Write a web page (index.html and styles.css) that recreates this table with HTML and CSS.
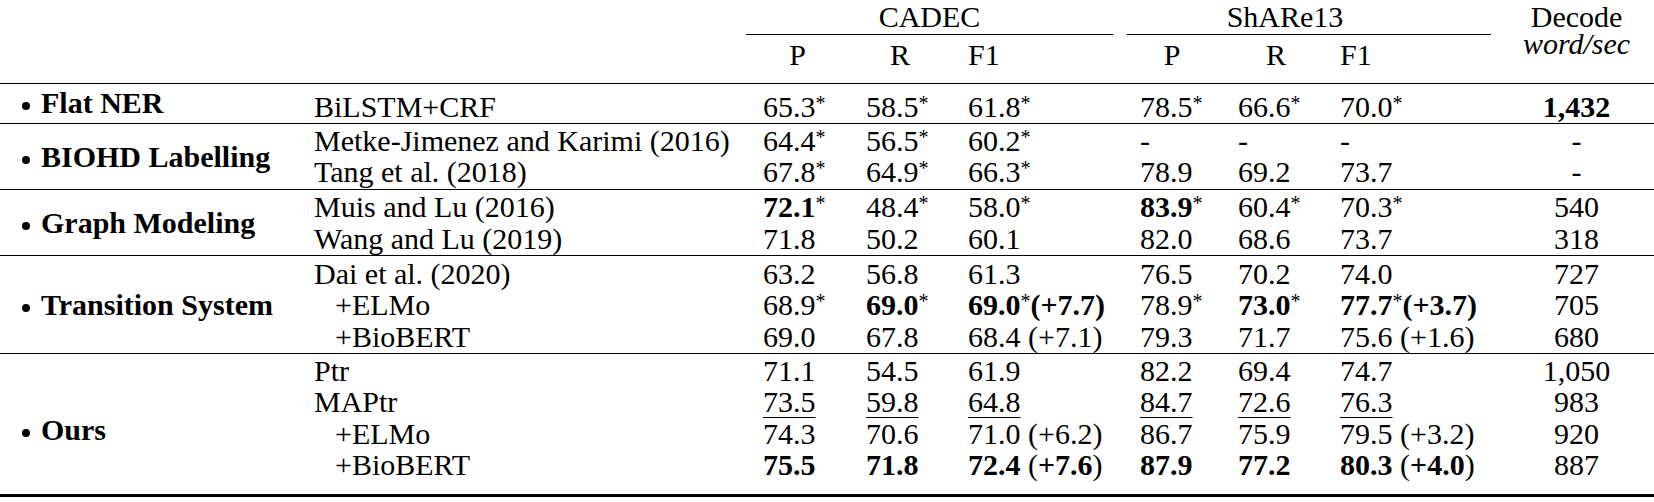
FILE: index.html
```html
<!DOCTYPE html>
<html lang="en">
<head>
  <meta charset="UTF-8">
  <title>Discontinuous NER results</title>
  <link rel="stylesheet" href="styles.css">
</head>
<body>

<table class="results">
  <colgroup>
    <col class="c-cat">
    <col class="c-model">
    <col class="c-p1">
    <col class="c-r1">
    <col class="c-f1">
    <col class="c-p2">
    <col class="c-r2">
    <col class="c-f2">
    <col class="c-speed">
  </colgroup>

  <thead>
    <tr class="head-1">
      <th rowspan="2"></th>
      <th rowspan="2"></th>
      <th colspan="3"><div class="group rule-cadec">CADEC</div></th>
      <th colspan="3"><div class="group rule-share"><span class="share-name">ShARe13</span></div></th>
      <th rowspan="2" class="speed-head">
        <div class="speed-1">Decode</div>
        <div class="speed-2"><i>word/sec</i></div>
      </th>
    </tr>
    <tr class="head-2">
      <th class="mid">P</th>
      <th class="mid">R</th>
      <th class="left">F1</th>
      <th class="mid">P</th>
      <th class="mid shift">R</th>
      <th class="left">F1</th>
    </tr>
  </thead>

  <!-- Flat NER -->
  <tbody class="flat">
    <tr>
      <td class="cat"><span class="dot"></span><b>Flat NER</b></td>
      <td class="m">BiLSTM+CRF</td>
      <td class="n">65.3<sup>*</sup></td>
      <td class="n">58.5<sup>*</sup></td>
      <td class="n">61.8<sup>*</sup></td>
      <td class="n">78.5<sup>*</sup></td>
      <td class="n">66.6<sup>*</sup></td>
      <td class="n">70.0<sup>*</sup></td>
      <td class="s"><b>1,432</b></td>
    </tr>
  </tbody>

  <!-- BIOHD -->
  <tbody class="biohd">
    <tr>
      <td class="cat" rowspan="2"><span class="dot"></span><b>BIOHD Labelling</b></td>
      <td class="m">Metke-Jimenez and Karimi (2016)</td>
      <td class="n">64.4<sup>*</sup></td>
      <td class="n">56.5<sup>*</sup></td>
      <td class="n">60.2<sup>*</sup></td>
      <td class="n">-</td>
      <td class="n">-</td>
      <td class="n">-</td>
      <td class="s">-</td>
    </tr>
    <tr>
      <td class="m">Tang et al. (2018)</td>
      <td class="n">67.8<sup>*</sup></td>
      <td class="n">64.9<sup>*</sup></td>
      <td class="n">66.3<sup>*</sup></td>
      <td class="n">78.9</td>
      <td class="n">69.2</td>
      <td class="n">73.7</td>
      <td class="s">-</td>
    </tr>
  </tbody>

  <!-- Graph -->
  <tbody>
    <tr>
      <td class="cat" rowspan="2"><span class="dot"></span><b>Graph Modeling</b></td>
      <td class="m">Muis and Lu (2016)</td>
      <td class="n"><b>72.1</b><sup>*</sup></td>
      <td class="n">48.4<sup>*</sup></td>
      <td class="n">58.0<sup>*</sup></td>
      <td class="n"><b>83.9</b><sup>*</sup></td>
      <td class="n">60.4<sup>*</sup></td>
      <td class="n">70.3<sup>*</sup></td>
      <td class="s">540</td>
    </tr>
    <tr>
      <td class="m">Wang and Lu (2019)</td>
      <td class="n">71.8</td>
      <td class="n">50.2</td>
      <td class="n">60.1</td>
      <td class="n">82.0</td>
      <td class="n">68.6</td>
      <td class="n">73.7</td>
      <td class="s">318</td>
    </tr>
  </tbody>

  <!-- Transition -->
  <tbody class="trans">
    <tr>
      <td class="cat" rowspan="3"><span class="dot"></span><b>Transition System</b></td>
      <td class="m">Dai et al. (2020)</td>
      <td class="n">63.2</td>
      <td class="n">56.8</td>
      <td class="n">61.3</td>
      <td class="n">76.5</td>
      <td class="n">70.2</td>
      <td class="n">74.0</td>
      <td class="s">727</td>
    </tr>
    <tr>
      <td class="m sub">+ELMo</td>
      <td class="n">68.9<sup>*</sup></td>
      <td class="n"><b>69.0</b><sup>*</sup></td>
      <td class="n"><b>69.0</b><sup>*</sup><b>(+7.7)</b></td>
      <td class="n">78.9<sup>*</sup></td>
      <td class="n"><b>73.0</b><sup>*</sup></td>
      <td class="n"><b>77.7</b><sup>*</sup><b>(+3.7)</b></td>
      <td class="s">705</td>
    </tr>
    <tr>
      <td class="m sub">+BioBERT</td>
      <td class="n">69.0</td>
      <td class="n">67.8</td>
      <td class="n">68.4 (+7.1)</td>
      <td class="n">79.3</td>
      <td class="n">71.7</td>
      <td class="n">75.6 (+1.6)</td>
      <td class="s">680</td>
    </tr>
  </tbody>

  <!-- Ours -->
  <tbody class="last">
    <tr>
      <td class="cat" rowspan="4"><span class="dot"></span><b>Ours</b></td>
      <td class="m">Ptr</td>
      <td class="n">71.1</td>
      <td class="n">54.5</td>
      <td class="n">61.9</td>
      <td class="n">82.2</td>
      <td class="n">69.4</td>
      <td class="n">74.7</td>
      <td class="s">1,050</td>
    </tr>
    <tr>
      <td class="m">MAPtr</td>
      <td class="n"><u>73.5</u></td>
      <td class="n"><u>59.8</u></td>
      <td class="n"><u>64.8</u></td>
      <td class="n"><u>84.7</u></td>
      <td class="n"><u>72.6</u></td>
      <td class="n"><u>76.3</u></td>
      <td class="s">983</td>
    </tr>
    <tr>
      <td class="m sub">+ELMo</td>
      <td class="n">74.3</td>
      <td class="n">70.6</td>
      <td class="n">71.0 (+6.2)</td>
      <td class="n">86.7</td>
      <td class="n">75.9</td>
      <td class="n">79.5 (+3.2)</td>
      <td class="s">920</td>
    </tr>
    <tr>
      <td class="m sub">+BioBERT</td>
      <td class="n"><b>75.5</b></td>
      <td class="n"><b>71.8</b></td>
      <td class="n"><b>72.4</b> (<b>+7.6</b>)</td>
      <td class="n"><b>87.9</b></td>
      <td class="n"><b>77.2</b></td>
      <td class="n"><b>80.3</b> (<b>+4.0</b>)</td>
      <td class="s">887</td>
    </tr>
  </tbody>
</table>

</body>
</html>
```

FILE: styles.css
```css
html, body {
  margin: 0;
  background: #fff;
}

body {
  font-family: "Liberation Serif", "Times New Roman", serif;
  font-size: 30px;
  color: #000;
}

.results {
  width: 1654px;
  table-layout: fixed;
  border-collapse: collapse;
  border-spacing: 0;
}

/* column widths */
.c-cat   { width: 297px; }
.c-model { width: 449px; }
.c-p1    { width: 103px; }
.c-r1    { width: 102px; }
.c-f1    { width: 172px; }
.c-p2    { width: 98px; }
.c-r2    { width: 102px; }
.c-f2    { width: 176px; }
.c-speed { width: 155px; }

.results th {
  font-weight: normal;
  padding: 0;
  white-space: nowrap;
}

.results td {
  padding: 0 0 0 17px;
  line-height: 31.5px;
  white-space: nowrap;
  text-align: left;
}

/* header */
.head-1 th {
  vertical-align: top;
}

.group {
  line-height: 33px;
  padding-bottom: 1px;
  border-bottom: 1px solid #000;
  text-align: center;
}

.rule-cadec { margin-right: 10px; }
.rule-share { margin-left: 4px; margin-right: 8px; }
.share-name { padding-right: 48px; }

.head-2 th {
  line-height: 31.5px;
  padding-top: 4px;
  padding-bottom: 12px;
}

.head-2 .mid   { text-align: center; }
.head-2 .shift { padding-left: 8px; }
.head-2 .left  { text-align: left; padding-left: 17px; }

.speed-head {
  vertical-align: top;
  text-align: center;
}
.speed-1 { line-height: 33px; }
.speed-2 { line-height: 22px; }

thead {
  border-bottom: 1px solid #000;
}

/* body blocks */
tbody {
  border-bottom: 1px solid #000;
}

.results tbody tr:first-child td {
  padding-top: 1px;
}

.results tbody tr:last-child td {
  padding-bottom: 0.5px;
}

.results tbody.flat tr td {
  padding-top: 7px;
  padding-bottom: 0.5px;
}

.results tbody.biohd tr:last-child td {
  padding-bottom: 1.5px;
}

.results tbody.trans tr:first-child td {
  padding-top: 2px;
}

/* bottom rule drawn by the last row */
.results tbody.last {
  border-bottom: 0;
}

.results tbody.last tr:last-child td {
  padding-bottom: 13px;
  border-bottom: 3px solid #000;
}

.results tbody tr td.cat {
  padding-left: 22px;
  padding-top: 0;
  padding-bottom: 0;
  vertical-align: middle;
}

.results tbody.last tr td.cat {
  padding-top: 12px;
  border-bottom: 3px solid #000;
}

.dot {
  display: inline-block;
  width: 8px;
  height: 8px;
  border-radius: 50%;
  background: #000;
  margin-right: 11px;
  vertical-align: 3px;
}

.results td.sub {
  padding-left: 38px;
}

.results td.s {
  padding-left: 0;
  text-align: center;
}

sup {
  font-size: 20px;
  line-height: 0;
  vertical-align: 7px;
}

u {
  text-decoration-thickness: 1px;
  text-underline-offset: 5px;
}
```
